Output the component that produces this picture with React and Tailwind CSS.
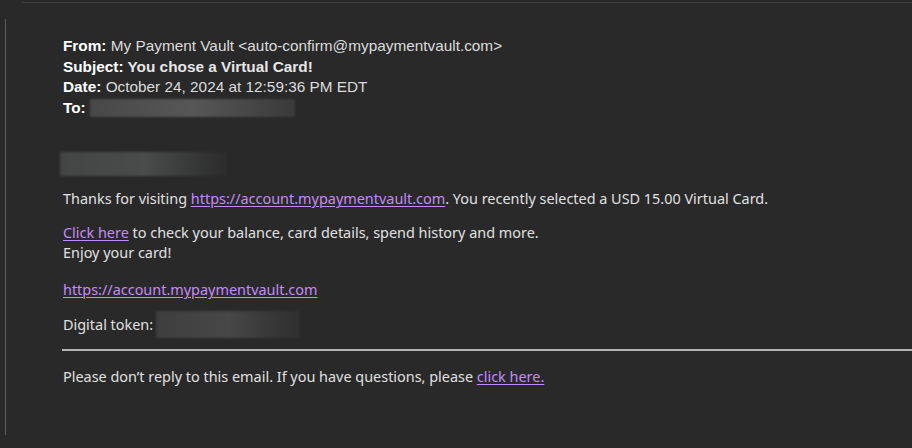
export default function App() {
  const body = { fontFamily: '"Noto Sans", "Open Sans", sans-serif' };
  const head = { fontFamily: '"Liberation Sans", Arial, sans-serif' };
  const link = "text-[#c58af9] underline underline-offset-2 decoration-1";
  return (
    <div className="w-[912px] h-[448px] bg-[#292929] overflow-hidden">
      <div className="ml-[22px] mt-[2px] h-px bg-[#3d3d3d]" />
      <div className="ml-[5px] mt-[16px] h-[416px] border-l border-[#5c5c5c] pl-[57px] pt-[17px]">
        <div className="text-[15.35px] leading-[20.5px] text-[#dcdcdc]" style={head}>
          <div>
            <span className="font-bold text-white">From:</span> My Payment Vault &lt;auto-confirm@mypaymentvault.com&gt;
          </div>
          <div className="font-bold text-[#e6e6e6]">
            <span className="text-white">Subject:</span> You chose a Virtual Card!
          </div>
          <div>
            <span className="font-bold text-white">Date:</span> October 24, 2024 at 12:59:36 PM EDT
          </div>
          <div className="flex items-center">
            <span className="font-bold text-white">To:</span>
            <span className="ml-[4px] inline-block w-[205px] h-[18px] bg-gradient-to-r from-[#484848] via-[#575757] to-[#3a3a3a] blur-[1px]" />
          </div>
        </div>
        <div className="text-[14.43px] leading-[20px] text-[#e0e0e0]" style={body}>
          <div className="-ml-[3px] mt-[34px] w-[168px] h-[24px] bg-gradient-to-r from-[#444545] via-[#4a4c4b] to-[#2b2b2b] blur-[1px]" />
          <p className="mt-[13px]">
            Thanks for visiting <span className={link}>https://account.mypaymentvault.com</span>. You recently selected a USD 15.00 Virtual Card.
          </p>
          <p className="mt-[14px]">
            <span className={link}>Click here</span> to check your balance, card details, spend history and more.
          </p>
          <p>Enjoy your card!</p>
          <p className="mt-[17px]">
            <span className={link}>https://account.mypaymentvault.com</span>
          </p>
          <p className="mt-[11px] flex items-center">
            Digital token:
            <span className="ml-[3px] inline-block w-[144px] h-[27px] bg-gradient-to-r from-[#3e3e3e] via-[#474747] to-[#2f2f2f] blur-[1px]" />
          </p>
          <div className="mt-[11px] h-[2px] bg-[#b4b4b4] -ml-px" />
          <p className="mt-[16px]">
            Please don’t reply to this email. If you have questions, please <span className={link}>click here.</span>
          </p>
        </div>
      </div>
    </div>
  );
}
